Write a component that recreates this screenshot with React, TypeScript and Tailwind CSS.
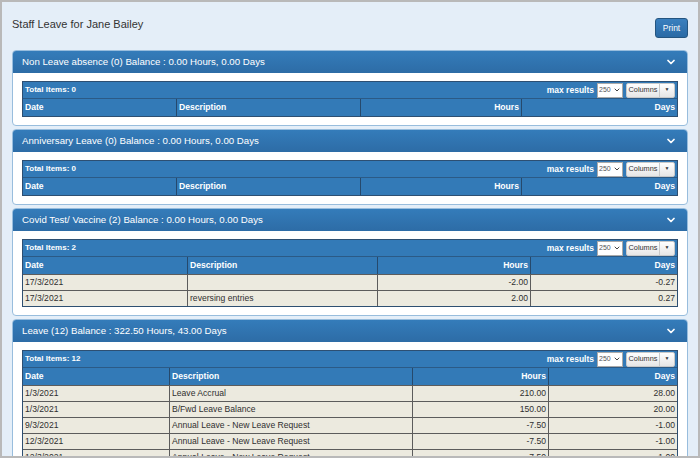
import { ChevronDown } from "lucide-react";

type Row = { date: string; desc: string; hours: string; days: string };

type Section = {
  title: string;
  total: number;
  cols: [string, string, string]; // widths of date, description, hours
  rows: Row[];
};

const SECTIONS: Section[] = [
  {
    title: "Non Leave absence (0) Balance : 0.00 Hours, 0.00 Days",
    total: 0,
    cols: ["w-[154px]", "w-[184px]", "w-[161px]"],
    rows: [],
  },
  {
    title: "Anniversary Leave (0) Balance : 0.00 Hours, 0.00 Days",
    total: 0,
    cols: ["w-[154px]", "w-[184px]", "w-[161px]"],
    rows: [],
  },
  {
    title: "Covid Test/ Vaccine (2) Balance : 0.00 Hours, 0.00 Days",
    total: 2,
    cols: ["w-[165px]", "w-[190px]", "w-[153px]"],
    rows: [
      { date: "17/3/2021", desc: "", hours: "-2.00", days: "-0.27" },
      { date: "17/3/2021", desc: "reversing entries", hours: "2.00", days: "0.27" },
    ],
  },
  {
    title: "Leave (12) Balance : 322.50 Hours, 43.00 Days",
    total: 12,
    cols: ["w-[147px]", "w-[243px]", "w-[136px]"],
    rows: [
      { date: "1/3/2021", desc: "Leave Accrual", hours: "210.00", days: "28.00" },
      { date: "1/3/2021", desc: "B/Fwd Leave Balance", hours: "150.00", days: "20.00" },
      { date: "9/3/2021", desc: "Annual Leave - New Leave Request", hours: "-7.50", days: "-1.00" },
      { date: "12/3/2021", desc: "Annual Leave - New Leave Request", hours: "-7.50", days: "-1.00" },
      { date: "12/3/2021", desc: "Annual Leave - New Leave Request", hours: "-7.50", days: "-1.00" },
      { date: "13/3/2021", desc: "Annual Leave - New Leave Request", hours: "-7.50", days: "-1.00" },
    ],
  },
];

function Toolbar({ total }: { total: number }) {
  return (
    <div className="flex h-[17px] items-center justify-between border-b border-[#2b5a86] bg-[#337ab7] pl-[2px] pr-[2px] font-bold text-white">
      <span className="text-[8px]">Total Items: {total}</span>
      <div className="flex items-center gap-[3px]">
        <span className="text-[8.5px]">max results</span>
        <div className="flex h-[15px] w-[26px] items-center justify-between border border-[#aaa] bg-white pl-[1px] pr-[1px] text-[7px] font-normal text-[#555]">
          250
          <ChevronDown size={8} strokeWidth={3} className="text-[#444]" />
        </div>
        <div className="flex h-[15px] w-[49px] items-stretch rounded-[2px] border border-[#c9c9c9] bg-gradient-to-b from-white to-[#e6e6e6] text-[7.3px] font-normal text-[#333]">
          <span className="flex flex-1 items-center justify-center">Columns</span>
          <span className="flex w-[15px] items-center justify-center border-l border-[#c9c9c9] text-[5px]">▼</span>
        </div>
      </div>
    </div>
  );
}

function LeaveTable({ s }: { s: Section }) {
  return (
    <div className="border border-[#2d4f72]">
      <Toolbar total={s.total} />
      <table className="w-full border-separate border-spacing-0 text-[8.6px] leading-[15px]">
        <thead>
          <tr className="bg-[#337ab7] text-[8.6px] font-bold text-white">
            <th className={`${s.cols[0]} h-[17px] border-r border-[#26496c] px-[2px] text-left`}>Date</th>
            <th className={`${s.cols[1]} h-[17px] border-r border-[#26496c] px-[2px] text-left`}>Description</th>
            <th className={`${s.cols[2]} h-[17px] border-r border-[#26496c] px-[2px] text-right`}>Hours</th>
            <th className="h-[17px] px-[2px] text-right">Days</th>
          </tr>
        </thead>
        <tbody>
          {s.rows.map((r, i) => (
            <tr key={i} className="bg-[#eceadf] text-[#2f2f2f]">
              <td className="h-[16px] border-r border-t border-[#5c5c5c] px-[2px] py-0">{r.date}</td>
              <td className="h-[16px] border-r border-t border-[#5c5c5c] px-[2px] py-0">{r.desc}</td>
              <td className="h-[16px] border-r border-t border-[#5c5c5c] px-[2px] py-0 text-right">{r.hours}</td>
              <td className="h-[16px] border-t border-[#5c5c5c] px-[2px] py-0 text-right">{r.days}</td>
            </tr>
          ))}
        </tbody>
      </table>
    </div>
  );
}

export default function App() {
  return (
    <div className="h-[458px] w-[700px] overflow-hidden border-2 border-[#b9b9b9] bg-[#e4eef8] px-[10px] font-['Liberation_Sans',Arial,sans-serif]">
      {/* page header */}
      <div className="mb-[12px] mt-[14px] flex items-start justify-between">
        <h1 className="text-[11px] leading-[17px] text-[#333]">Staff Leave for Jane Bailey</h1>
        <button className="mt-[2px] h-[20px] w-[33px] rounded-[3px] border border-[#245580] bg-gradient-to-b from-[#3a80bf] to-[#2a6aa5] text-[8.5px] text-white">
          Print
        </button>
      </div>

      {SECTIONS.map((s) => (
        <div key={s.title} className="mb-[3px] overflow-hidden rounded-[4px] border border-[#98bddd] bg-white">
          <div className="flex h-[22px] items-center justify-between bg-gradient-to-b from-[#347cba] to-[#2d6ca6] pl-[9px] pr-[10px] text-[9.7px] text-white">
            <span>{s.title}</span>
            <ChevronDown size={12} strokeWidth={3.5} />
          </div>
          <div className="px-[9px] pb-[8px] pt-[8px]">
            <LeaveTable s={s} />
          </div>
        </div>
      ))}
    </div>
  );
}
